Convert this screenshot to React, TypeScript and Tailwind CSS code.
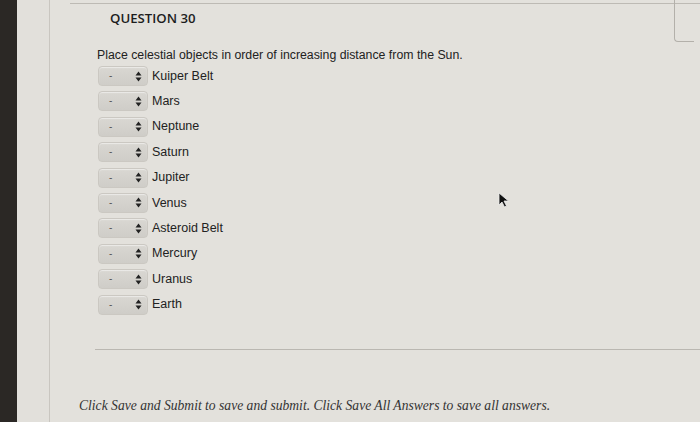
const items = [
  'Kuiper Belt',
  'Mars',
  'Neptune',
  'Saturn',
  'Jupiter',
  'Venus',
  'Asteroid Belt',
  'Mercury',
  'Uranus',
  'Earth',
];

function Stepper() {
  return (
    <svg width="7" height="11" viewBox="0 0 7 11" className="text-[#222]">
      <path d="M3.5 0.5 L6.5 4.5 H0.5 Z" fill="currentColor" />
      <path d="M3.5 10.5 L6.5 6.5 H0.5 Z" fill="currentColor" />
    </svg>
  );
}

export default function App() {
  return (
    <div className="relative flex w-[700px] h-[422px] overflow-hidden bg-[#e3e1dc] font-['Liberation_Sans',Arial,sans-serif]">
      {/* dark edge */}
      <div className="w-[17px] shrink-0 bg-[#2b2825]" />
      {/* side column */}
      <div className="w-[33px] shrink-0 border-r border-[#c9c6c0] bg-[#e2e0db]" />

      {/* main */}
      <div className="relative flex-1 flex flex-col">
        <div className="ml-[20px] mt-[3px] border-t border-[#bdbab4]" />
        <div className="absolute right-[6px] top-[-4px] h-[46px] w-[20px] rounded-bl-[4px] border-l border-b border-[#b3b0aa]" />

        <h2 className="ml-[60px] mt-[5px] text-[13.2px] leading-[18px] font-semibold text-[#1d1d1d] font-['Open_Sans',sans-serif]">
          QUESTION 30
        </h2>

        <p className="ml-[47px] mt-[20px] text-[12.3px] leading-[16px] text-[#222]">
          Place celestial objects in order of increasing distance from the Sun.
        </p>

        <ul className="ml-[48px] mt-[3px] flex flex-col gap-[5.4px]">
          {items.map((name) => (
            <li key={name} className="flex items-center h-[20px]">
              <div className="flex items-center justify-between w-[50px] h-[20px] pl-[10px] pr-[5px] rounded-[4px] border border-[#cbc8c2] bg-gradient-to-b from-[#d9d7d2] to-[#cfcdc8] shadow-[inset_0_1px_1px_rgba(255,255,255,0.5)]">
                <span className="text-[10px] leading-none text-[#555]">-</span>
                <Stepper />
              </div>
              <span className="ml-[4px] text-[12.5px] text-[#222]">{name}</span>
            </li>
          ))}
        </ul>

        <div className="ml-[45px] mt-[34px] border-t-[1.5px] border-[#bab7b1]" />

        <p className="ml-[29px] mt-[46px] italic text-[13.6px] text-[#333] font-['Liberation_Serif',Georgia,serif]">
          Click Save and Submit to save and submit. Click Save All Answers to save all answers.
        </p>

        {/* cursor */}
        <svg className="absolute left-[448px] top-[192px]" width="12" height="16" viewBox="0 0 12 16">
          <path d="M1 1 L1 13 L4 10 L6.5 15 L8.5 14 L6 9 L10.5 9 Z" fill="#111" stroke="#eee" strokeWidth="0.8" />
        </svg>
      </div>
    </div>
  );
}
